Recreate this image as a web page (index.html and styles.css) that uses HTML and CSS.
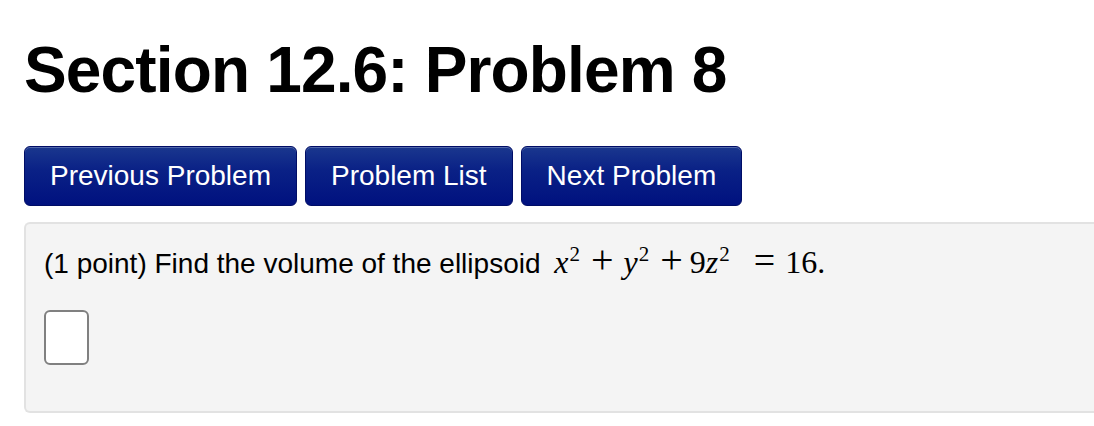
FILE: index.html
```html
<!DOCTYPE html>
<html>
<head>
<meta charset="utf-8">
<link rel="stylesheet" href="styles.css">
</head>
<body>
<h1 class="title">Section 12.6: Problem 8</h1>
<div class="nav">
  <button class="btn">Previous Problem</button>
  <button class="btn">Problem List</button>
  <button class="btn">Next Problem</button>
</div>
<div class="panel">
  <p class="question">(1 point) Find the volume of the ellipsoid <span class="math"><i class="v vx">x</i><sup>2</sup><span class="op">+</span><i class="v vy">y</i><sup>2</sup><span class="op">+</span><span class="n9">9</span><i class="v vz">z</i><sup>2</sup><span class="eq">=</span><span class="num">16.</span></span></p>
  <div class="answer"><span class="box"></span></div>
</div>
</body>
</html>
```
FILE: styles.css
```css
html, body {
  margin: 0;
  padding: 0;
  background: #fff;
}
body {
  padding: 0 0 0 24px;
  font-family: "Liberation Sans", Arial, sans-serif;
  color: #000;
}
.title {
  margin: 0;
  padding-top: 38px;
  font-size: 64px;
  line-height: 64px;
  font-weight: bold;
  letter-spacing: -0.85px;
}
.nav {
  display: flex;
  gap: 8px;
  margin-top: 44px;
}
.btn {
  height: 60px;
  padding: 0 25px;
  border: 1px solid #000d66;
  border-radius: 6px;
  background: linear-gradient(#1a378e, #0a2186 40%, #00117f);
  color: #fff;
  font-family: "Liberation Sans", Arial, sans-serif;
  font-size: 28px;
  box-shadow: inset 0 1px 0 rgba(255,255,255,0.25);
}
.panel {
  margin-top: 16px;
  height: 191px;
  background: #f4f4f4;
  border: 2px solid #e2e2e2;
  border-right: none;
  border-radius: 6px 0 0 6px;
  box-sizing: border-box;
  padding: 18px 18px;
}
.question {
  margin: 0;
  font-size: 28px;
  line-height: 40px;
  white-space: nowrap;
}
.math {
  font-family: "Liberation Serif", "Times New Roman", serif;
  font-size: 32px;
  margin-left: 6px;
}
.math i {
  font-style: italic;
}
.math sup {
  font-size: 21px;
  vertical-align: 0;
  position: relative;
  top: -12px;
  margin-left: 1px;
}
.op {
  display: inline-block;
  font-size: 40px;
  line-height: 20px;
  margin: 0 8px 0 11px;
}
.vy {
  margin-left: 2px;
}
.n9 {
  margin-left: -1px;
}
.eq {
  display: inline-block;
  font-size: 38px;
  line-height: 20px;
  margin: 0 10px 0 24px;
}
.answer {
  margin-top: 24px;
}
.box {
  display: block;
  width: 45px;
  height: 55px;
  box-sizing: border-box;
  background: #fff;
  border: 2px solid #808080;
  border-radius: 6px;
}
```
